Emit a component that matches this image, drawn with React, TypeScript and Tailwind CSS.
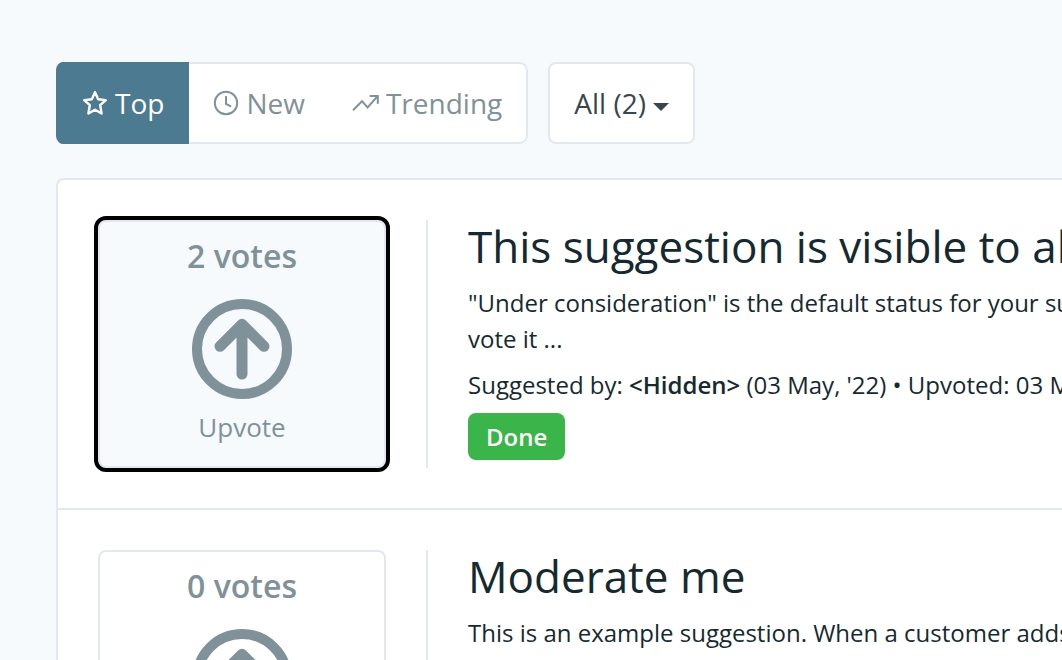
import { useState } from 'react';

type SortKey = 'top' | 'new' | 'trending';

interface Suggestion {
  id: number;
  votes: number;
  title: string;
  lines: string[];
  date: string;
  upvoted: string;
  status: string;
}

const suggestions: Suggestion[] = [
  {
    id: 1,
    votes: 2,
    title: 'This suggestion is visible to all',
    lines: [
      '"Under consideration" is the default status for your suggestions',
      'vote it ...',
    ],
    date: "(03 May, '22)",
    upvoted: '03 May',
    status: 'Done',
  },
  {
    id: 2,
    votes: 0,
    title: 'Moderate me',
    lines: ['This is an example suggestion. When a customer adds', 'they do'],
    date: "(03 May, '22)",
    upvoted: '03 May',
    status: 'Done',
  },
];

function StarIcon() {
  return (
    <svg viewBox="0 0 26 26" className="size-[26px]" fill="none" stroke="currentColor" strokeWidth="2.4" strokeLinejoin="round" aria-hidden="true">
      <path d="M13 2.2l3.2 7 7.6.9-5.6 5.1 1.4 8.3-6.6-3.8-6.6 3.8 1.4-8.3-5.6-5.1 7.6-.9z" />
    </svg>
  );
}

function ClockIcon() {
  return (
    <svg viewBox="0 0 26 26" className="size-[26px]" fill="none" stroke="currentColor" strokeWidth="2" strokeLinecap="round" aria-hidden="true">
      <circle cx="13" cy="13" r="11.2" />
      <path d="M13 6.8v7l4.4 2.3" />
    </svg>
  );
}

function TrendIcon() {
  return (
    <svg viewBox="0 0 27 26" className="h-[26px] w-[27px]" fill="none" stroke="currentColor" strokeWidth="2" aria-hidden="true">
      <path d="M1 20.2l9-9 5.6 6.2L25.4 6.4M17.6 6h8.2v7.8" />
    </svg>
  );
}

const tabs = [
  { key: 'top' as SortKey, label: 'Top', icon: <StarIcon />, className: 'pl-[26px] pr-[25px]' },
  { key: 'new' as SortKey, label: 'New', icon: <ClockIcon />, className: 'px-6' },
  { key: 'trending' as SortKey, label: 'Trending', icon: <TrendIcon />, className: 'pl-[23px] pr-6' },
];

function UpvoteIcon() {
  return (
    <svg viewBox="0 0 100 100" className="size-[100px]" fill="none" stroke="currentColor" aria-hidden="true">
      <circle cx="50" cy="50" r="45" strokeWidth="10" />
      <path d="M50 75V26M28 47.3L50 25.3l22 22" strokeWidth="11" strokeLinecap="round" strokeLinejoin="round" />
    </svg>
  );
}

function SuggestionRow({ item, active }: { item: Suggestion; active: boolean }) {
  return (
    <li className="flex border-b-2 border-[#e2e8ee] p-10">
      <button
        type="button"
        className={`flex h-[248px] w-72 shrink-0 flex-col items-center rounded-lg border-2 border-[#e2e8ee] pt-3 text-[#7f9299] ${
          active ? 'bg-[#f6fafd] outline-4 outline-black' : 'bg-white'
        }`}
      >
        <span className="text-[32px] leading-11 font-semibold">{item.votes} votes</span>
        <span className="mt-[21px] mb-[14px]">
          <UpvoteIcon />
        </span>
        <span className="text-[26px] leading-7">Upvote</span>
      </button>

      <div className="ml-10 border-l-2 border-[#e2e8ee] pl-10 whitespace-nowrap">
        <h2 className="text-[44px] leading-[52px]">{item.title}</h2>
        <p className="mt-[13px] text-2xl leading-9">
          {item.lines.map((line) => (
            <span key={line} className="block">
              {line}
            </span>
          ))}
        </p>
        <p className="mt-[10px] text-2xl leading-9">
          Suggested by: <strong className="font-semibold">&lt;Hidden&gt;</strong> {item.date} • Upvoted: {item.upvoted}
        </p>
        <span className="mt-[10px] inline-block rounded-lg bg-[#3ab54a] px-[18px] text-2xl leading-[47px] font-semibold text-white">
          {item.status}
        </span>
      </div>
    </li>
  );
}

export default function App() {
  const [sort, setSort] = useState<SortKey>('top');

  return (
    <main className="h-screen overflow-hidden bg-[#f6fafd] pt-[62px] pl-14 font-['Open_Sans',sans-serif] text-[#152a30]">
      <div className="flex gap-5 text-[28px]">
        <div className="flex h-[82px] overflow-hidden rounded-lg bg-white">
          {tabs.map((tab) => (
            <button
              key={tab.key}
              type="button"
              aria-pressed={sort === tab.key}
              onClick={() => setSort(tab.key)}
              className={`flex items-center gap-[7px] border-y-2 last:rounded-r-lg last:border-r-2 ${tab.className} ${
                sort === tab.key
                  ? 'border-[#4c7b91] bg-[#4c7b91] text-white'
                  : 'border-[#e2e8ee] text-[#7f9299]'
              }`}
            >
              {tab.icon}
              {tab.label}
            </button>
          ))}
        </div>
        <button
          type="button"
          aria-haspopup="menu"
          className="flex h-[82px] items-center gap-[7px] rounded-lg border-2 border-[#e2e8ee] bg-white px-6 text-[#38474d]"
        >
          All (2)
          <svg viewBox="0 0 16 8" className="mt-2 h-2 w-4" fill="currentColor" aria-hidden="true">
            <path d="M0 0h16L8 8z" />
          </svg>
        </button>
      </div>

      <ul className="mt-[34px] rounded-tl-lg border-t-2 border-l-2 border-[#e2e8ee] bg-white">
        {suggestions.map((item, i) => (
          <SuggestionRow key={item.id} item={item} active={i === 0} />
        ))}
      </ul>
    </main>
  );
}
